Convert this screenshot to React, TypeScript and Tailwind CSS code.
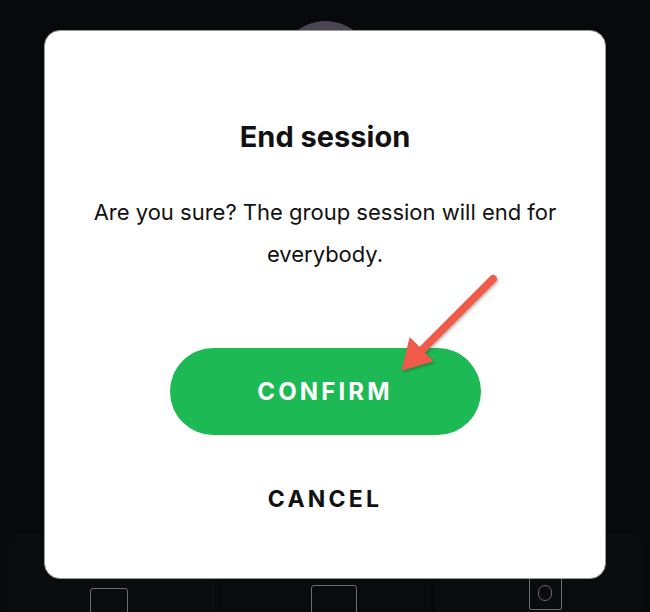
import React from 'react'

const font = { fontFamily: 'Inter, "Noto Sans", sans-serif' }

function BottomBar() {
  return (
    <div className="absolute left-0 right-0 bottom-0 h-[77px] flex gap-[6px] px-[8px]">
      <div className="flex-1 rounded-t-[10px] bg-[#0b0c0e] relative">
        <div className="absolute left-[82px] top-[53px] w-[38px] h-[40px] rounded-[3px] border-[1.5px] border-[#6e6e6e]" />
      </div>
      <div className="flex-1 rounded-t-[10px] bg-[#0a0b0d] relative">
        <div className="absolute left-[90px] top-[50px] w-[46px] h-[40px] rounded-[3px] border-[1.5px] border-[#6e6e6e]" />
      </div>
      <div className="flex-1 rounded-t-[10px] bg-[#0b0c0e] relative">
        <div className="absolute left-[94px] top-[30px] w-[33px] h-[45px] rounded-[2px] border-[1.5px] border-[#6e6e6e] flex items-end justify-center pb-[8px]">
          <div className="w-[14px] h-[16px] rounded-full border-[1.5px] border-[#6e6e6e]" />
        </div>
      </div>
    </div>
  )
}

function Arrow() {
  return (
    <svg
      className="absolute inset-0 pointer-events-none"
      width="650"
      height="612"
      viewBox="0 0 650 612"
    >
      <defs>
        <filter id="sh" x="-20%" y="-20%" width="140%" height="140%">
          <feDropShadow dx="1" dy="1.5" stdDeviation="1.5" floodColor="#000" floodOpacity="0.3" />
        </filter>
      </defs>
      <g filter="url(#sh)" fill="#ef5a4c" stroke="#ef5a4c">
        <line x1="493" y1="279" x2="420" y2="352" strokeWidth="8" strokeLinecap="round" />
        <polygon points="402,370 410,338 433,361" strokeWidth="1" strokeLinejoin="round" />
      </g>
    </svg>
  )
}

export default function App() {
  return (
    <div className="relative w-[650px] h-[612px] overflow-hidden bg-[#08090b]" style={font}>
      <div className="absolute left-[279px] top-[21px] w-[93px] h-[93px] rounded-full bg-[#4b4453]" />
      <BottomBar />

      <div className="absolute left-[44px] top-[30px] w-[562px] h-[549px] rounded-[16px] bg-white border border-[#9a9a9a] flex flex-col items-center">
        <h1 className="mt-[89px] text-[29px] leading-[34px] font-bold text-[#111111]">
          End session
        </h1>
        <p className="mt-[37px] text-[22px] leading-[42px] text-[#111111] text-center">
          Are you sure? The group session will end for
          <br />
          everybody.
        </p>
        <button className="mt-[73px] w-[311px] h-[87px] rounded-full bg-[#1db954] text-white text-[24px] font-bold tracking-[0.13em]">
          CONFIRM
        </button>
        <button className="mt-[49px] h-[30px] leading-[30px] text-[23px] font-bold tracking-[0.14em] text-[#111111]">
          CANCEL
        </button>
      </div>

      <Arrow />
    </div>
  )
}
